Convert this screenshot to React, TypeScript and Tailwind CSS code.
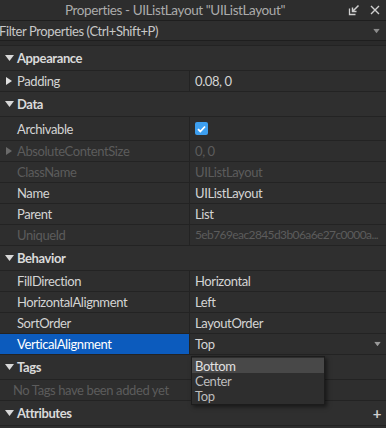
type Row = {
  name: string;
  value?: React.ReactNode;
  dim?: boolean;
  arrow?: boolean;
  selected?: boolean;
  dropdown?: boolean;
  tall?: boolean;
  valueClass?: string;
};

function DownTri({ className = "" }: { className?: string }) {
  return (
    <svg width="9" height="6" viewBox="0 0 9 6" className={className}>
      <path d="M0 0h9L4.5 6z" fill="currentColor" />
    </svg>
  );
}

function RightTri({ dim }: { dim?: boolean }) {
  return (
    <svg width="6" height="8" viewBox="0 0 6 8" className={dim ? "text-[#6a6a6a]" : "text-[#e0e0e0]"}>
      <path d="M0 0l6 4-6 4z" fill="currentColor" />
    </svg>
  );
}

function Section({ title, extra }: { title: string; extra?: React.ReactNode }) {
  return (
    <div className="flex h-[25px] items-center border-b border-[#232323] bg-[#2f2f2f]">
      <div className="flex w-[17px] justify-center pl-[1px] text-[#d8d8d8]">
        <DownTri />
      </div>
      <span className="font-bold text-[#dadada]">{title}</span>
      {extra}
    </div>
  );
}

function PropRow({ r }: { r: Row }) {
  const text = r.dim ? "text-[#5c5c5c]" : "text-[#d4d4d4]";
  return (
    <div className={`flex ${r.tall ? "h-[24px]" : "h-[21px]"} border-b border-[#232323]`}>
      <div
        className={`flex w-[190px] items-center border-r border-[#232323] ${
          r.selected ? "bg-[#0c5bbd] text-white" : `bg-[#2e2e2e] ${text}`
        }`}
      >
        <div className="flex w-[17px] justify-center">{r.arrow && <RightTri dim={r.dim} />}</div>
        <span>{r.name}</span>
      </div>
      <div className={`flex min-w-0 flex-1 items-center whitespace-nowrap bg-[#2e2e2e] pl-[5px] pr-[4px] ${text}`}>
        <span className={r.valueClass}>{r.value}</span>
        {r.dropdown && <DownTri className="ml-auto scale-75 text-[#9a9a9a]" />}
      </div>
    </div>
  );
}

export default function App() {
  const data: Row[] = [
    {
      name: "Archivable",
      tall: true,
      value: (
        <span className="flex h-[13px] w-[13px] items-center justify-center rounded-[2px] bg-[#3d9ff0]">
          <svg width="9" height="8" viewBox="0 0 9 8">
            <path d="M1 4.2l2.3 2.3L8 1.5" stroke="white" strokeWidth="1.8" fill="none" />
          </svg>
        </span>
      ),
    },
    { name: "AbsoluteContentSize", value: "0, 0", dim: true, arrow: true },
    { name: "ClassName", value: "UIListLayout", dim: true },
    { name: "Name", value: "UIListLayout" },
    { name: "Parent", value: "List" },
    {
      name: "UniqueId",
      value: "5eb769eac2845d3b06a6e27c0000a...",
      dim: true,
      valueClass: "text-[12px] tracking-[-0.6px]",
    },
  ];
  const behavior: Row[] = [
    { name: "FillDirection", value: "Horizontal" },
    { name: "HorizontalAlignment", value: "Left" },
    { name: "SortOrder", value: "LayoutOrder" },
    { name: "VerticalAlignment", value: "Top", selected: true, dropdown: true },
  ];

  return (
    <div
      className="relative h-[428px] w-[386px] overflow-hidden bg-[#2e2e2e] text-[13px] leading-[16px] tracking-[-0.4px]"
      style={{ fontFamily: "Lato, 'Noto Sans', sans-serif" }}
    >
      {/* title bar */}
      <div className="relative flex h-[21px] items-center justify-center border-b border-[#1e1e1e] bg-[#2d2d2d] text-[#ababab]">
        <span className="-ml-[36px] text-[13.5px]">Properties - UIListLayout "UIListLayout"</span>
        <div className="absolute right-[6px] top-[4px] flex items-center gap-[10px] text-[#cfcfcf]">
          <svg width="12" height="12" viewBox="0 0 12 12">
            <path d="M1.5 4.5v6h6" stroke="currentColor" strokeWidth="1.3" fill="none" />
            <path d="M10.5 1.5L4.5 7.5M4.5 3.5v4h4" stroke="currentColor" strokeWidth="1.5" fill="none" />
          </svg>
          <svg width="10" height="10" viewBox="0 0 10 10">
            <path d="M1 1l8 8M9 1L1 9" stroke="currentColor" strokeWidth="1.4" />
          </svg>
        </div>
      </div>
      {/* filter */}
      <div className="flex h-[20px] items-center border-b border-[#1e1e1e] bg-[#2e2e2e] pr-[5px] text-[#c8c8c8]">
        <span className="-ml-[1px]">Filter Properties (Ctrl+Shift+P)</span>
        <DownTri className="ml-auto scale-75 text-[#8c8c8c]" />
      </div>
      <div className="h-[5px] border-b border-[#232323] bg-[#2a2a2a]" />

      <Section title="Appearance" />
      <PropRow r={{ name: "Padding", value: "0.08, 0", arrow: true }} />
      <Section title="Data" />
      {data.map((r) => (
        <PropRow key={r.name} r={r} />
      ))}
      <Section title="Behavior" />
      {behavior.map((r) => (
        <PropRow key={r.name} r={r} />
      ))}
      <Section title="Tags" />
      <div className="flex h-[21px] items-center border-b border-[#232323] pl-[13px] text-[#5c5c5c]">
        No Tags have been added yet
      </div>
      <Section
        title="Attributes"
        extra={<span className="ml-auto mr-[5px] text-[15px] font-bold text-[#cfcfcf]">+</span>}
      />

      {/* dropdown */}
      <div className="absolute left-[191px] top-[356px] w-[134px] border border-[#1c1c1c] bg-[#2e2e2e] py-[1px] shadow-[2px_2px_4px_rgba(0,0,0,0.5)]">
        <div className="flex h-[15px] items-center bg-[#484848] pl-[3px] text-[#e2e2e2]">Bottom</div>
        <div className="flex h-[15px] items-center pl-[3px] text-[#bdbdbd]">Center</div>
        <div className="flex h-[15px] items-center pl-[3px] text-[#bdbdbd]">Top</div>
      </div>
    </div>
  );
}
